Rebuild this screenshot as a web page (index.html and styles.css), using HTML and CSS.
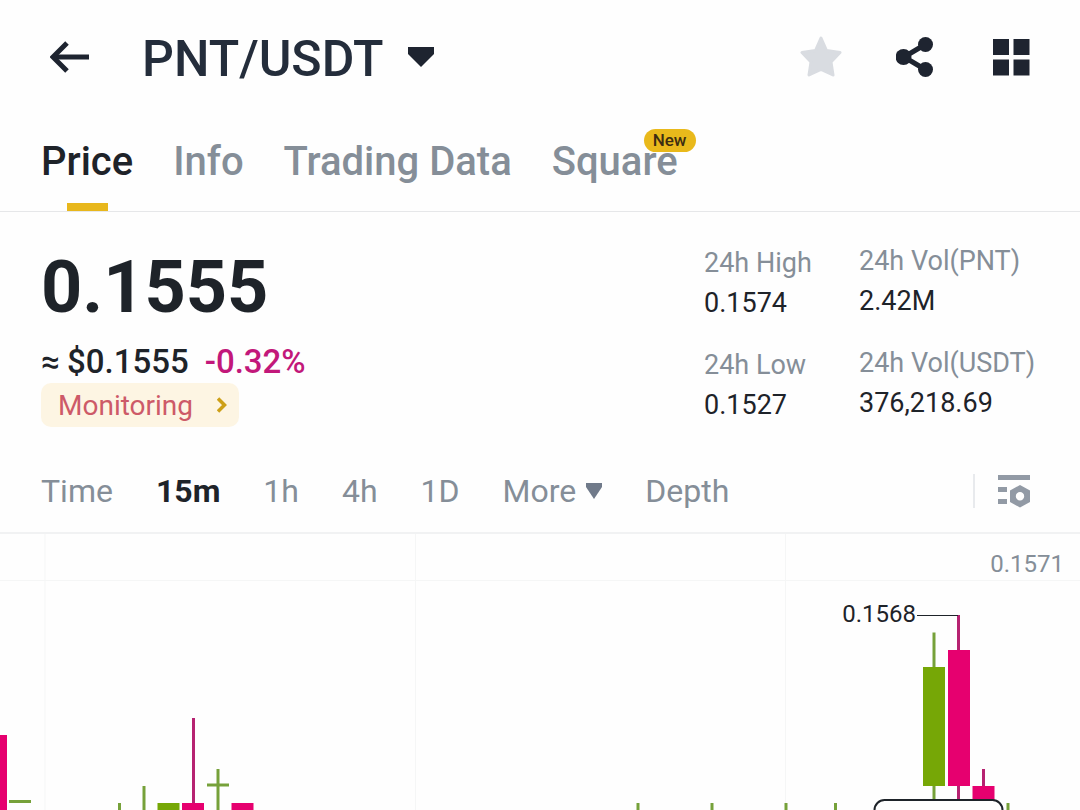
FILE: index.html
```html
<!DOCTYPE html>
<html lang="en">
<head>
<meta charset="utf-8">
<meta name="viewport" content="width=device-width, initial-scale=1">
<title>PNT/USDT</title>
<link rel="stylesheet" href="styles.css">
</head>
<body>
<header class="topbar">
  <button class="icon-btn back" type="button" aria-label="Back">
    <svg width="40" height="32" viewBox="0 0 40 32" fill="none" stroke="#1e2430" stroke-width="5"><path d="M3 16H39"/><path d="M17 2L3 16l14 14"/></svg>
  </button>
  <button class="pair" type="button">
    <span>PNT/USDT</span>
    <svg width="26" height="20" viewBox="0 0 26 20"><path fill="#1e2430" d="M0 0H26V7L13 20L0 7Z"/></svg>
  </button>
  <div class="actions">
    <button class="icon-btn" type="button" aria-label="Favorite">
      <svg width="42" height="42" viewBox="0 0 42 42"><path fill="#d9dce1" stroke="#d9dce1" stroke-width="3" stroke-linejoin="round" d="M21 2L26.500 14.500L40 16.500L31 26L33 39L21 33.500L9 39L11 26L2 16.500L15.500 14.500Z"/></svg>
    </button>
    <button class="icon-btn" type="button" aria-label="Share">
      <svg width="42" height="42" viewBox="0 0 42 42"><path d="M30 8L8 21L30 34" fill="none" stroke="#1e2430" stroke-width="5"/><g fill="#1e2430"><circle cx="29.500" cy="8.500" r="7.500"/><circle cx="7.500" cy="21" r="8"/><circle cx="29.500" cy="33.500" r="7.500"/></g></svg>
    </button>
    <button class="icon-btn" type="button" aria-label="Layout">
      <svg width="38" height="38" viewBox="0 0 38 38" fill="#1e2430"><path d="M1 1h16v16H1zM21.500 1h16v16h-16zM1 21.500h16v16H1zM21.500 21.500h16v16h-16z"/></svg>
    </button>
  </div>
</header>

<nav class="tabs">
  <a class="tab active" href="#price">Price</a>
  <a class="tab" href="#info">Info</a>
  <a class="tab" href="#data">Trading Data</a>
  <a class="tab" href="#square">Square<span class="badge">New</span></a>
</nav>

<main>
  <section class="summary" id="price">
    <div class="quote">
      <div class="last">0.1555</div>
      <div class="fiat"><span class="approx">≈</span><span>$0.1555</span><span class="change">-0.32%</span></div>
      <button class="tag" type="button">
        <span>Monitoring</span>
        <svg width="10" height="16" viewBox="0 0 10 16" fill="none" stroke="#cda018" stroke-width="3.500"><path d="M1 1.500L7.500 8L1 14.500"/></svg>
      </button>
    </div>
    <dl class="stats">
      <div class="stat"><dt>24h High</dt><dd>0.1574</dd></div>
      <div class="stat"><dt>24h Low</dt><dd>0.1527</dd></div>
    </dl>
    <dl class="stats volumes">
      <div class="stat"><dt>24h Vol(PNT)</dt><dd>2.42M</dd></div>
      <div class="stat"><dt>24h Vol(USDT)</dt><dd>376,218.69</dd></div>
    </dl>
  </section>

  <div class="intervals">
    <button class="interval" type="button">Time</button>
    <button class="interval selected" type="button">15m</button>
    <button class="interval" type="button">1h</button>
    <button class="interval" type="button">4h</button>
    <button class="interval" type="button">1D</button>
    <button class="interval more" type="button">More
      <svg width="16" height="16" viewBox="0 0 16 16"><path fill="#707a8a" d="M0 0H16V4L8 16L0 4Z"/></svg>
    </button>
    <button class="interval" type="button">Depth</button>
    <button class="settings" type="button" aria-label="Chart settings">
      <svg width="32" height="34" viewBox="0 0 32 34" fill="#929aa5"><path d="M0 1H32V6H0zM0 13H9V18H0zM0 25H9V30H0z"/><path fill-rule="evenodd" d="M22 11L32 16.500V28L22 33.500L12 28V16.500ZM22 18a4.200 4.200 0 1 0 0 8.400a4.200 4.200 0 1 0 0-8.400Z"/></svg>
    </button>
  </div>

  <svg class="chart" viewBox="0 0 1080 276" role="img" aria-label="15 minute candlestick chart">
    <path class="grid" d="M45 0V276M415.500 0V276M785.500 0V276M0 46.500H1080"/>
    <g class="down">
      <path class="wick" d="M193.500 184v86M958.500 81v185M983.500 235v18"/>
      <path d="M0 201h7v75H0zM182 269h22v7h-22zM231.500 269h22v7h-22zM948 116h22v136h-22zM972.500 252h22v14h-22z"/>
    </g>
    <g class="up">
      <path class="wick" d="M9 267.500h22M207 251h22M218 235v41M119.500 269v7M144 252v24M638 269v7M712 269v7M786 269v7M835.500 269v7M934 98.500v168M1008 269v7"/>
      <path d="M157.500 269h22v7h-22zM923 133h22v119h-22z"/>
    </g>
    <path class="leader" d="M917 81.500H958"/>
    <rect class="callout" x="874.500" y="266" width="128" height="40" rx="10"/>
    <text class="axis" x="1064" y="38" text-anchor="end">0.1571</text>
    <text class="peak" x="916" y="88" text-anchor="end">0.1568</text>
  </svg>
</main>
</body>
</html>
```
FILE: styles.css
```css
* { box-sizing: border-box; }
body {
  margin: 0;
  background: #fefefe;
  color: #1e2329;
  font-family: Roboto, "Liberation Sans", sans-serif;
}
button {
  padding: 0;
  border: 0;
  background: none;
  color: inherit;
  font: inherit;
  cursor: pointer;
}
svg { display: block; flex: none; }

.topbar {
  display: flex;
  align-items: center;
  height: 114px;
  padding: 0 50px;
}
.pair {
  display: flex;
  align-items: center;
  gap: 24px;
  margin-left: 52px;
  color: #242d3b;
  font-size: 50px;
  font-weight: 500;
  line-height: 60px;
}
.pair span { padding-top: 4px; }
.actions {
  display: flex;
  align-items: center;
  gap: 54px;
  margin-left: auto;
}

.tabs {
  display: flex;
  gap: 40px;
  height: 98px;
  padding: 24px 42px 0 41px;
  border-bottom: 1px solid #e6e7e9;
}
.tab {
  position: relative;
  color: #858e98;
  font-size: 40px;
  font-weight: 500;
  line-height: 48px;
  text-decoration: none;
  white-space: nowrap;
}
.tab.active { color: #1e2329; }
.tab.active::after {
  content: "";
  position: absolute;
  bottom: 0;
  left: 50%;
  width: 41px;
  height: 8px;
  margin-left: -20px;
  background: #e8b71c;
}
.badge {
  position: absolute;
  top: -9px;
  right: -18px;
  width: 52px;
  border-radius: 12px;
  background: #e9b91b;
  color: #3c2d12;
  font-size: 17px;
  line-height: 23px;
  text-align: center;
}

.summary {
  display: flex;
  padding: 29px 41px 0;
}
.quote { flex: 1; padding-top: 3px; }
.last {
  font-size: 72px;
  font-weight: 700;
  line-height: 88px;
}
.fiat {
  display: flex;
  margin-top: 10px;
  font-size: 33px;
  font-weight: 500;
  line-height: 40px;
}
.approx { width: 26px; }
.change { margin-left: 16px; color: #c2187a; }
.tag {
  display: flex;
  align-items: center;
  gap: 24px;
  height: 44px;
  margin-top: 1px;
  padding: 0 12px 0 17px;
  border-radius: 10px;
  background: #fdf5e3;
  color: #cd5a68;
  font-size: 28px;
}
.stats {
  width: 155px;
  margin: 0;
}
.stats.volumes { width: 180px; }
.stats:not(.volumes) { padding-top: 2px; }
.stat + .stat { margin-top: 22px; }
dt, dd {
  margin: 0;
  font-size: 27px;
  line-height: 40px;
  white-space: nowrap;
}
dt { color: #858e98; }

.intervals {
  display: flex;
  align-items: center;
  gap: 43px;
  height: 86px;
  margin-top: 21px;
  padding: 2px 50px 0 41px;
  border-bottom: 2px solid #f1f2f3;
}
.interval {
  color: #858e98;
  font-size: 32px;
  line-height: 40px;
}
.interval.selected { color: #1e2329; font-weight: 700; }
.interval.more {
  display: flex;
  align-items: center;
  gap: 10px;
}
.settings {
  margin-left: auto;
  padding-left: 23px;
  border-left: 2px solid #e8eaed;
}

.chart { width: 100%; height: auto; }
.grid { fill: none; stroke: #f5f6f6; stroke-width: 1; }
.up { fill: #76a706; stroke: #76a13a; }
.down { fill: #e6006f; stroke: #b62271; }
.up path, .down path { stroke-width: 0; }
.up .wick, .down .wick { fill: none; stroke-width: 3; }
.leader { fill: none; stroke: #1e2329; stroke-width: 1; }
.callout { fill: #fefefe; stroke: #1e2329; stroke-width: 2; }
.axis, .peak { font-size: 24px; }
.axis { fill: #858e98; }
.peak { fill: #1e2329; }
```
